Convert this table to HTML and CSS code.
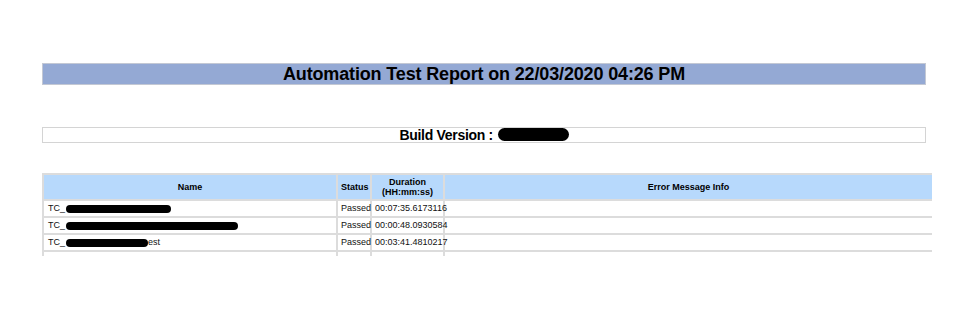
FILE: index.html
```html
<!DOCTYPE html>
<html>
<head>
<meta charset="utf-8">
<link rel="stylesheet" href="styles.css">
</head>
<body>
<div class="page">
  <div class="title">Automation Test Report on 22/03/2020 04:26 PM</div>
  <div class="build">Build Version : <span class="redact redact-build"></span></div>
  <table class="report">
    <thead>
      <tr>
        <th class="c-name">Name</th>
        <th class="c-status">Status</th>
        <th class="c-dur">Duration<br>(HH:mm:ss)</th>
        <th class="c-err">Error Message Info</th>
      </tr>
    </thead>
    <tbody>
      <tr>
        <td>TC_<span class="redact r1"></span></td>
        <td>Passed</td>
        <td>00:07:35.6173116</td>
        <td></td>
      </tr>
      <tr>
        <td>TC_<span class="redact r2"></span></td>
        <td>Passed</td>
        <td>00:00:48.0930584</td>
        <td></td>
      </tr>
      <tr>
        <td>TC_<span class="redact r3"></span>est</td>
        <td>Passed</td>
        <td>00:03:41.4810217</td>
        <td></td>
      </tr>
      <tr class="stub">
        <td></td><td></td><td></td><td></td>
      </tr>
    </tbody>
  </table>
</div>
</body>
</html>
```
FILE: styles.css
```css
html, body {
  margin: 0;
  padding: 0;
  background: #fff;
}
body {
  font-family: "Liberation Sans", Arial, sans-serif;
  color: #000;
}
.page {
  padding: 63px 0 0 42px;
  width: 890px;
}
.title {
  width: 882px;
  height: 20px;
  background: #94a9d4;
  border: 1px solid #c3c8d4;
  font-weight: bold;
  font-size: 18px;
  line-height: 20px;
  text-align: center;
  letter-spacing: -0.15px;
}
.build {
  margin-top: 42px;
  width: 882px;
  height: 14px;
  border: 1px solid #d4d4d4;
  font-weight: bold;
  font-size: 14px;
  line-height: 14px;
  text-align: center;
  letter-spacing: -0.3px;
}
.redact {
  display: inline-block;
  background: #000;
  border-radius: 8px;
  vertical-align: middle;
}
.redact-build {
  width: 71px;
  height: 13px;
  margin-left: 1px;
  margin-top: -3px;
}
.report {
  margin-top: 30px;
  width: 890px;
  border-collapse: collapse;
  font-size: 9px;
  table-layout: fixed;
}
.report th, .report td {
  border: 2px solid #dcdcdc;
  padding: 0 3px;
}
.report tr > :last-child {
  border-right: none;
}
.report th {
  background: #b7d9fc;
  height: 24px;
  font-weight: bold;
  text-align: center;
  line-height: 10px;
}
.report td {
  height: 15px;
  line-height: 15px;
  white-space: nowrap;
  color: #111;
}
.report td:first-child {
  padding-left: 4px;
  overflow: hidden;
}
.c-name { width: 286px; }
.c-status { width: 26px; }
.c-dur { width: 65px; }
.report .stub td {
  height: 4px;
  border-bottom: none;
}
.r1 { width: 105px; height: 8px; margin-left: 1px; }
.r2 { width: 172px; height: 8px; margin-left: 1px; }
.r3 { width: 82px; height: 8px; margin-left: 1px; }
```
